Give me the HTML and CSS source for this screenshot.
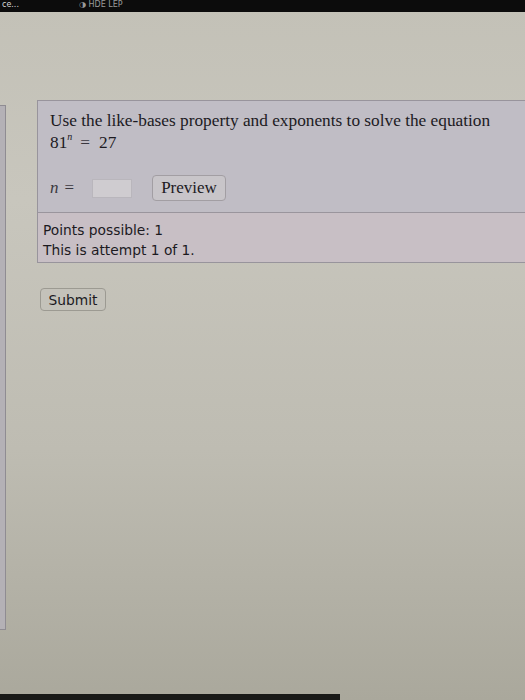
FILE: index.html
```html
<!DOCTYPE html>
<html>
<head>
<meta charset="utf-8">
<link rel="stylesheet" href="styles.css">
</head>
<body>
<div class="topbar"><span class="tab">ce...</span><span class="tab dim">◑ HDE LEP</span></div>
<div class="screen">
  <div class="rail"></div>
  <div class="content">
    <div class="question">
      <div class="qtop">
        <p class="qtext">Use the like-bases property and exponents to solve the equation</p>
        <p class="eq">81<sup class="var">n</sup><span class="op">=</span>27</p>
        <div class="answer">
          <span class="label"><span class="var">n</span><span class="op">=</span></span>
          <span class="input"></span>
          <span class="btn preview">Preview</span>
        </div>
      </div>
      <div class="qinfo">
        <div>Points possible: 1</div>
        <div>This is attempt 1 of 1.</div>
      </div>
    </div>
    <div class="submit-row"><span class="btn submit">Submit</span></div>
  </div>
</div>
<div class="bottombar"></div>
</body>
</html>
```
FILE: styles.css
```css
html, body {
  margin: 0;
  padding: 0;
  height: 700px;
  overflow: hidden;
}
body {
  background: linear-gradient(180deg, #c3c1b7 0px, #c8c6bd 200px, #bebcb2 450px, #aaa89c 700px);
  font-family: "Liberation Serif", serif;
  color: #1c1a1f;
  display: flex;
  flex-direction: column;
}
.topbar {
  height: 12px;
  background: #0c0c0c;
  color: #d8d8d8;
  font-family: "DejaVu Sans", sans-serif;
  font-size: 8px;
  line-height: 10px;
  display: flex;
  gap: 60px;
  padding-left: 2px;
  overflow: hidden;
}
.tab.dim { color: #9a9a9a; }
.screen {
  flex: 1;
  display: flex;
  align-items: flex-start;
}
.rail {
  width: 5px;
  height: 523px;
  margin-top: 93px;
  background: #b4b1b6;
  border: 1px solid #8f8c92;
  border-left: none;
  flex: none;
}
.content {
  flex: 1;
  margin-left: 31px;
  margin-top: 88px;
  margin-right: -4px;
}
.question {
  border: 1px solid #98949c;
  background: #c0bdc5;
}
.qtop {
  padding: 9px 12px 11px 12px;
  border-bottom: 1px solid #9a959d;
}
.qtext {
  margin: 0;
  font-size: 17.3px;
  line-height: 22px;
}
.eq {
  margin: 0;
  font-size: 17.3px;
  line-height: 22px;
}
.eq sup {
  font-size: 10px;
  vertical-align: 8px;
  line-height: 0;
}
.eq .op { margin: 0 9px 0 8px; }
.var { font-style: italic; }
.op { color: #3a3840; }
.answer {
  display: flex;
  align-items: center;
  margin-top: 21px;
  height: 26px;
}
.label {
  font-size: 17px;
  width: 42px;
  color: #3a3840;
}
.label .op { margin-left: 6px; }
.input {
  width: 40px;
  height: 19px;
  background: #cfccd0;
  border: 1px solid #b9b6bc;
  box-sizing: border-box;
}
.btn {
  display: inline-flex;
  align-items: center;
  justify-content: center;
  box-sizing: border-box;
  border: 1px solid #a29ea3;
  border-radius: 4px;
}
.preview {
  margin-left: 20px;
  width: 74px;
  height: 26px;
  background: #c8c5c9;
  font-size: 17px;
  font-family: "Liberation Serif", serif;
}
.qinfo {
  background: #c8bfc5;
  padding: 7px 5px 2px 5px;
  font-family: "DejaVu Sans", sans-serif;
  font-size: 13.8px;
  line-height: 20px;
}
.submit-row {
  margin-top: 25px;
  padding-left: 3px;
}
.submit {
  width: 66px;
  height: 23px;
  background: #c4c2ba;
  border-color: #9c9a92;
  font-family: "DejaVu Sans", sans-serif;
  font-size: 13.8px;
}
.bottombar {
  position: absolute;
  left: 0;
  top: 694px;
  width: 340px;
  height: 6px;
  background: #1a1a18;
}
```
